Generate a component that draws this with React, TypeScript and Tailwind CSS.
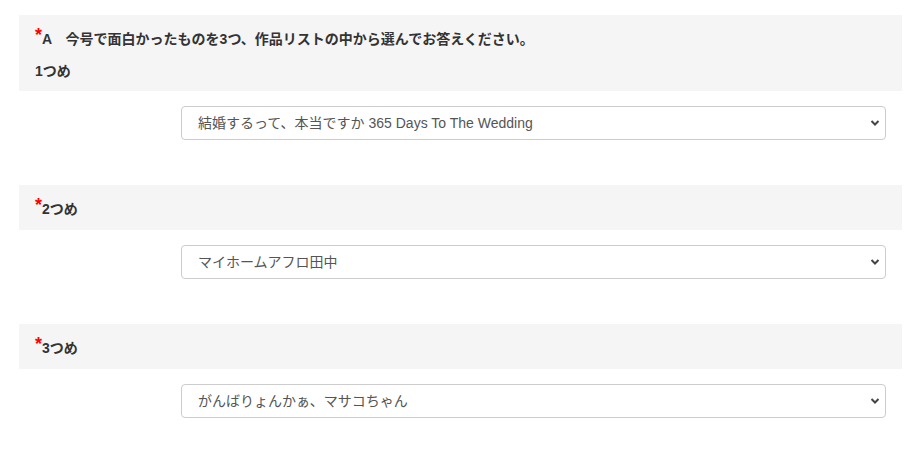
import React from "react";

const questions = [
  { label: "2つめ", value: "マイホームアフロ田中" },
  { label: "3つめ", value: "がんばりょんかぁ、マサコちゃん" },
];

function Asterisk() {
  return <span className="text-[#ff0000] text-[18px] leading-none relative -top-[3px] font-bold">*</span>;
}

function SelectBox({ value }: { value: string }) {
  return (
    <div className="relative">
      <select
        defaultValue={value}
        className="w-full h-[34px] appearance-none bg-white border border-[#cccccc] rounded-[4px] pl-4 pr-8 text-[14px] text-[#555555] outline-none"
      >
        <option>{value}</option>
      </select>
      <svg
        className="absolute right-[6px] top-[13px] pointer-events-none"
        width="10"
        height="8"
        viewBox="0 0 10 8"
      >
        <path d="M1.5 2 L5 5.5 L8.5 2" fill="none" stroke="#444" strokeWidth="2" />
      </svg>
    </div>
  );
}

export default function App() {
  return (
    <div
      className="w-[921px] h-[451px] bg-white px-[19px] pt-[15px] text-[#333333] overflow-hidden"
      style={{ fontFamily: '"Liberation Sans", Arial, "Noto Sans CJK JP", sans-serif' }}
    >
      <div className="bg-[#f5f5f5] pl-4 pt-[14px] pb-[10px]">
        <div className="text-[14px] font-bold leading-5 flex items-start">
          <Asterisk />
          <span>A　今号で面白かったものを3つ、作品リストの中から選んでお答えください。</span>
        </div>
        <div className="text-[14px] font-bold leading-5 mt-3">1つめ</div>
      </div>
      <div className="pl-[162px] pr-4 pt-[15px] pb-[45px]">
        <SelectBox value="結婚するって、本当ですか 365 Days To The Wedding" />
      </div>

      {questions.map((q) => (
        <div key={q.label}>
          <div className="bg-[#f5f5f5] pl-4 pt-[14px] pb-[11px]">
            <div className="text-[14px] font-bold leading-5 flex items-start">
              <Asterisk />
              <span>{q.label}</span>
            </div>
          </div>
          <div className="pl-[162px] pr-4 pt-[15px] pb-[45px]">
            <SelectBox value={q.value} />
          </div>
        </div>
      ))}
    </div>
  );
}
